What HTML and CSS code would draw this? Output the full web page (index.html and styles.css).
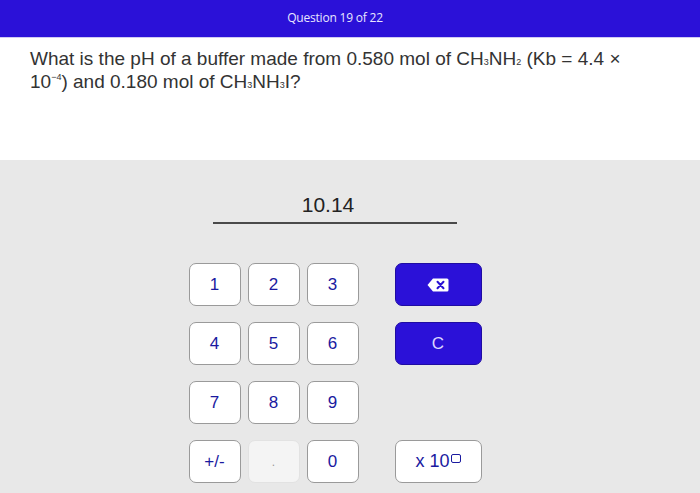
FILE: index.html
```html
<!DOCTYPE html>
<html lang="en">
<head>
    <meta charset="UTF-8">
    <meta name="viewport" content="width=device-width, initial-scale=1.0">
    <title>Question 19 of 22</title>
    <link rel="stylesheet" href="styles.css">
</head>
<body>
    <div class="topbar">Question 19 of 22</div>

    <div class="question">
        What is the pH of a buffer made from 0.580 mol of CH<sub>3</sub>NH<sub>2</sub> (Kb = 4.4 &times;<br>
        10<sup>&minus;4</sup>) and 0.180 mol of CH<sub>3</sub>NH<sub>3</sub>I?
    </div>

    <div class="answer-area">
        <div class="answer-inner">
            <div class="answer">10.14</div>

            <div class="keypad">
                <div class="digits">
                    <button class="key">1</button>
                    <button class="key">2</button>
                    <button class="key">3</button>
                    <button class="key">4</button>
                    <button class="key">5</button>
                    <button class="key">6</button>
                    <button class="key">7</button>
                    <button class="key">8</button>
                    <button class="key">9</button>
                    <button class="key">+/-</button>
                    <button class="key disabled">.</button>
                    <button class="key">0</button>
                </div>
                <div class="side">
                    <button class="key action" aria-label="Backspace">
                        <svg width="22" height="14" viewBox="0 0 22 14">
                            <path d="M6 0.5 H20 a1.5 1.5 0 0 1 1.5 1.5 V12 a1.5 1.5 0 0 1 -1.5 1.5 H6 L0.5 7 Z" fill="#fff"/>
                            <path d="M10.5 3.8 L16.5 10.2 M16.5 3.8 L10.5 10.2" stroke="#2a12d4" stroke-width="2" stroke-linecap="round"/>
                        </svg>
                    </button>
                    <button class="key action clear">C</button>
                    <span class="side-gap"></span>
                    <button class="key exp">x 10<span class="box"></span></button>
                </div>
            </div>
        </div>
    </div>
</body>
</html>
```

FILE: styles.css
```css
* {
    box-sizing: border-box;
}
html, body {
    margin: 0;
    height: 100%;
}
body {
    font-family: "Liberation Sans", Arial, sans-serif;
    display: flex;
    flex-direction: column;
    background: #e8e8e8;
}
.topbar {
    height: 38px;
    background: #2b11d8;
    border-bottom: 1px solid #cfcaf3;
    color: #e8e6ff;
    font-family: "Open Sans", sans-serif;
    font-size: 12px;
    letter-spacing: -0.2px;
    display: flex;
    align-items: center;
    justify-content: center;
    padding-right: 30px;
    padding-bottom: 2px;
}
.question {
    background: #fff;
    height: 122px;
    padding: 9px 30px 0;
    font-size: 19px;
    line-height: 23px;
    color: #333;
    white-space: nowrap;
}
.question sub,
.question sup {
    font-size: 9px;
    line-height: 0;
}
.question sub {
    vertical-align: 0;
}
.question sup {
    vertical-align: 8px;
}
.answer-area {
    flex: 1;
    background: #e8e8e8;
}
.answer-inner {
    width: 670px;
    display: flex;
    flex-direction: column;
    align-items: center;
    padding-top: 33px;
}
.answer {
    width: 244px;
    text-align: center;
    font-size: 21px;
    line-height: 24px;
    color: #222;
    padding-bottom: 5px;
    border-bottom: 2px solid #4a4a4a;
    padding-right: 14px;
}
.keypad {
    display: flex;
    gap: 36px;
    margin-top: 39px;
}
.digits {
    display: grid;
    grid-template-columns: repeat(3, 52px);
    grid-auto-rows: 43px;
    column-gap: 7px;
    row-gap: 16px;
}
.side {
    display: grid;
    grid-template-columns: 87px;
    grid-auto-rows: 43px;
    row-gap: 16px;
}
.key {
    font-family: "Liberation Sans", Arial, sans-serif;
    font-size: 17px;
    color: #1a1aa0;
    background: #fff;
    border: 1px solid #9a9a9a;
    border-radius: 7px;
    padding: 0;
    margin: 0;
    display: flex;
    align-items: center;
    justify-content: center;
    cursor: pointer;
}
.key.disabled {
    background: #f4f4f4;
    border-color: #e2e2e2;
    color: #999;
    font-size: 12px;
}
.key.action {
    background: #2b11d8;
    border-color: #1f0ca2;
    color: #fff;
}
.key.clear {
    font-size: 17px;
    color: #dcd8ff;
}
.key.exp {
    font-size: 18px;
}
.box {
    display: inline-block;
    width: 10px;
    height: 9px;
    border: 1.5px solid #1a1aa0;
    border-radius: 2px;
    margin-left: 1px;
    position: relative;
    top: -3px;
}
```
